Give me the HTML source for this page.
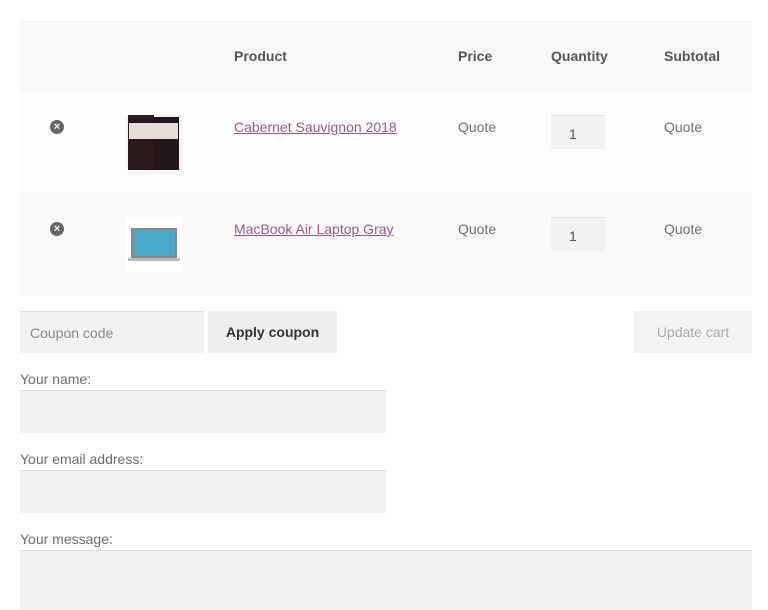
<!DOCTYPE html>
<html><head><style>
body{margin:0;background:#fff;font-family:"Liberation Sans",sans-serif;font-size:14px;color:#6d6d6d;width:768px;height:604px;overflow:hidden;position:relative}
div{position:absolute;box-sizing:border-box}
.h{font-weight:bold;color:#555;top:48px}
.t{top:119px}
.t2{top:221px}
a{color:#96588a;text-decoration:underline}
.x{width:14px;height:14px;border-radius:50%;background:#666;color:#fff;font-size:11px;font-weight:bold;line-height:14px;text-align:center}
.q{width:54px;height:34px;background:#f2f2f2;border-top:1px solid #e0e0e0;color:#555;padding:10px 0 0 18px}
.in{background:#f2f2f2;border-top:1px solid #ddd}
</style></head><body>
<div style="left:20px;top:20px;width:732px;height:71px;background:#f8f8f8"></div>
<div style="left:20px;top:91px;width:732px;height:102px;background:#fdfdfd"></div>
<div style="left:20px;top:193px;width:732px;height:103px;background:#f9f9f9"></div>
<div class="h" style="left:234px">Product</div>
<div class="h" style="left:458px">Price</div>
<div class="h" style="left:551px">Quantity</div>
<div class="h" style="left:664px">Subtotal</div>
<div class="x" style="left:50px;top:120px">×</div>
<div style="left:126px;top:115px;width:56px;height:55px;background:#f4f4f4">
<div style="left:2px;top:0;width:26px;height:55px;background:#2a1a1c"></div>
<div style="left:27px;top:2px;width:26px;height:53px;background:#231618"></div>
<div style="left:3px;top:8px;width:49px;height:16px;background:#e8dcd6"></div></div>
<div class="t" style="left:234px"><a>Cabernet Sauvignon 2018</a></div>
<div class="t" style="left:458px">Quote</div>
<div class="q" style="left:551px;top:115px">1</div>
<div class="t" style="left:664px">Quote</div>
<div class="x" style="left:50px;top:222px">×</div>
<div style="left:126px;top:217px;width:56px;height:55px;background:#fff">
<div style="left:5px;top:11px;width:46px;height:30px;background:#4aa8c8;border:2px solid #888"></div>
<div style="left:2px;top:41px;width:52px;height:3px;background:#bbb"></div></div>
<div class="t2" style="left:234px"><a>MacBook Air Laptop Gray</a></div>
<div class="t2" style="left:458px">Quote</div>
<div class="q" style="left:551px;top:217px">1</div>
<div class="t2" style="left:664px">Quote</div>
<div class="in" style="left:20px;top:311px;width:184px;height:42px;padding:13px 10px;color:#888">Coupon code</div>
<div style="left:208px;top:311px;width:129px;height:42px;background:#eee;font-weight:bold;color:#333;text-align:center;padding-top:13px">Apply coupon</div>
<div style="left:634px;top:311px;width:118px;height:42px;background:#f4f4f4;color:#aaa;text-align:center;padding-top:13px">Update cart</div>
<div style="left:20px;top:371px">Your name:</div>
<div class="in" style="left:20px;top:390px;width:366px;height:43px"></div>
<div style="left:20px;top:451px">Your email address:</div>
<div class="in" style="left:20px;top:470px;width:366px;height:43px"></div>
<div style="left:20px;top:531px">Your message:</div>
<div class="in" style="left:20px;top:550px;width:732px;height:60px"></div>
</body></html>
